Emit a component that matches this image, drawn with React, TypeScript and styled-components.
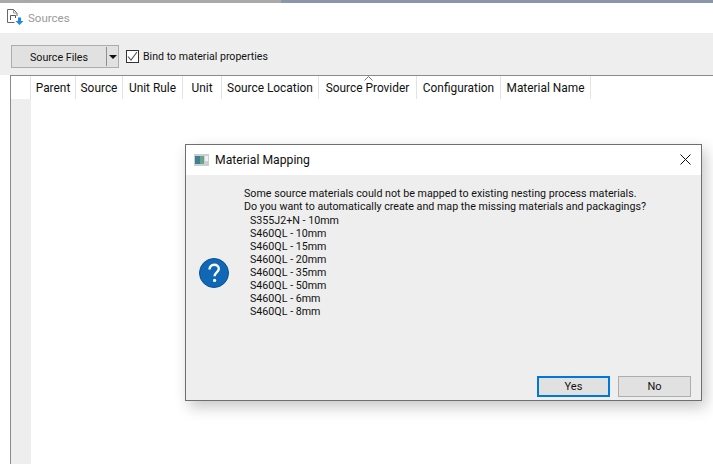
import styled, { createGlobalStyle } from 'styled-components';

const GlobalStyle = createGlobalStyle`
  html, body {
    margin: 0;
    padding: 0;
    background: #fff;
    overflow: hidden;
  }
  #root {
    height: 464px;
  }
`;

const FONT = 'Roboto, "Open Sans", "Liberation Sans", sans-serif';

const Page = styled.div`
  position: relative;
  width: 713px;
  height: 464px;
  display: flex;
  flex-direction: column;
  overflow: hidden;
  font-family: ${FONT};
  font-size: 12px;
  color: #111;
  background: #fff;
`;

const TopStrip = styled.div`
  height: 3px;
  flex: none;
  display: flex;
`;
const StripPart = styled.div<{ width?: number; color: string }>`
  background: ${({ color }) => color};
  ${({ width }) => (width ? `width: ${width}px;` : 'flex: 1;')}
`;

const TitleRow = styled.div`
  height: 30px;
  flex: none;
  display: flex;
  align-items: center;
  gap: 4px;
  padding-left: 7px;
`;
const TitleText = styled.span`
  font-size: 11.5px;
  color: #9a9a9a;
`;

const Toolbar = styled.div`
  height: 42px;
  flex: none;
  box-sizing: border-box;
  padding: 12px 0 0 11px;
  display: flex;
  align-items: flex-start;
  gap: 7px;
  background: #eeeeee;
`;

const SplitButton = styled.div`
  width: 108px;
  height: 23px;
  box-sizing: border-box;
  display: flex;
  align-items: center;
  background: #e1e1e1;
  border: 1px solid #adadad;
`;
const SplitLabel = styled.span`
  flex: 1;
  padding-top: 1px;
  text-align: center;
  font-size: 10.7px;
`;
const SplitDivider = styled.div`
  width: 1px;
  height: 19px;
  background: #8f8f8f;
`;
const SplitArrow = styled.div`
  width: 11px;
  display: flex;
  justify-content: center;
  &::before {
    content: '';
    border-top: 4px solid #111;
    border-left: 4px solid transparent;
    border-right: 4px solid transparent;
  }
`;

const CheckLabel = styled.label`
  height: 23px;
  display: flex;
  align-items: center;
  gap: 4px;
  font-size: 10.6px;
`;
const CheckBox = styled.span`
  width: 13px;
  height: 13px;
  box-sizing: border-box;
  display: flex;
  background: #fff;
  border: 1px solid #333;
`;

const Table = styled.div`
  flex: 1;
  display: flex;
  flex-direction: column;
  border-top: 1px solid #8a8a90;
  border-left: 1px solid #8a8a90;
  margin-left: 10px;
`;
const HeaderRow = styled.div`
  height: 23px;
  flex: none;
  display: flex;
`;
const Corner = styled.div`
  width: 19px;
  flex: none;
`;
const HeaderCell = styled.div<{ $width: number }>`
  position: relative;
  width: ${({ $width }) => $width}px;
  flex: none;
  box-sizing: border-box;
  display: flex;
  align-items: center;
  justify-content: center;
  white-space: nowrap;
  font-size: 11.9px;
  border-left: 1px solid #e3e3e3;
`;
const LastEdge = styled.div`
  width: 1px;
  background: #e3e3e3;
`;
const SortCaret = styled.svg`
  position: absolute;
  top: 0;
  left: 45px;
  width: 9px;
  height: 5px;
`;
const TableBody = styled.div`
  flex: 1;
  display: flex;
`;
const RowHeaders = styled.div`
  width: 20px;
  flex: none;
  background: #eeeeee;
`;

const Dialog = styled.div`
  position: absolute;
  left: 185px;
  top: 144px;
  width: 517px;
  height: 257px;
  box-sizing: border-box;
  display: flex;
  flex-direction: column;
  background: #eeeeee;
  border: 1px solid #6f6f6f;
  box-shadow: 4px 6px 14px rgba(0, 0, 0, 0.22);
`;
const DialogTitle = styled.div`
  height: 30px;
  flex: none;
  box-sizing: border-box;
  display: flex;
  align-items: center;
  gap: 6px;
  padding: 0 10px 1px 8px;
  background: #fff;
  font-size: 12.2px;
`;
const DialogName = styled.span`
  flex: 1;
`;
const DialogBody = styled.div`
  flex: 1;
  display: flex;
  align-items: center;
  padding-left: 13px;
  gap: 15px;
`;
const Message = styled.div`
  align-self: flex-start;
  padding-top: 12px;
  font-size: 10.7px;
  line-height: 13px;
  white-space: nowrap;
`;
const MaterialList = styled.ul`
  list-style: none;
  margin: 1px 0 0;
  padding: 0 0 0 6px;
`;
const DialogActions = styled.div`
  height: 29px;
  flex: none;
  box-sizing: border-box;
  display: flex;
  align-items: flex-end;
  justify-content: flex-end;
  gap: 8px;
  padding: 0 10px 3px 0;
`;
const DialogButton = styled.button<{ $primary?: boolean }>`
  width: 73px;
  height: 21px;
  padding: 0;
  box-sizing: border-box;
  font-family: ${FONT};
  font-size: 11px;
  color: #111;
  background: #e1e1e1;
  border: ${({ $primary }) => ($primary ? '2px solid #0078d7' : '1px solid #adadad')};
`;

const columns = [
  { label: 'Parent', width: 45 },
  { label: 'Source', width: 47 },
  { label: 'Unit Rule', width: 60 },
  { label: 'Unit', width: 39 },
  { label: 'Source Location', width: 97 },
  { label: 'Source Provider', width: 98, sorted: true },
  { label: 'Configuration', width: 84 },
  { label: 'Material Name', width: 90 },
];

const materials = [
  'S355J2+N - 10mm',
  'S460QL - 10mm',
  'S460QL - 15mm',
  'S460QL - 20mm',
  'S460QL - 35mm',
  'S460QL - 50mm',
  'S460QL - 6mm',
  'S460QL - 8mm',
];

const SourcesIcon = () => (
  <svg width="17" height="20" viewBox="0 0 17 20" fill="none">
    <path d="M.5 1.5h6l3.5 3.5v3M.5 1.5v13h7" stroke="#666" />
    <path d="M6.5 1.5v3.5H10" stroke="#999" />
    <path d="M3.5 12V7.5h5V10" stroke="#555" />
    <path d="M11 9.5h3v3.5h2.5l-4 4-4-4H11z" fill="#1e88e5" />
  </svg>
);

const WindowIcon = () => (
  <svg width="15" height="12" viewBox="0 0 15 12">
    <rect width="15" height="12" fill="#c9d0d2" />
    <rect x="1" y="2" width="5" height="8" fill="#3f7f8f" />
    <rect x="6" y="2" width="4" height="8" fill="#6fa08c" />
    <rect x="11" y="2" width="3" height="5" fill="#eef2f3" />
  </svg>
);

const QuestionIcon = () => (
  <svg width="30" height="30" viewBox="0 0 30 30">
    <circle cx="15" cy="15" r="14.5" fill="#0f67b5" stroke="#0c4f8f" />
    <path d="M10.5 11.5c0-3 2-4.7 4.7-4.7s4.6 1.7 4.6 4c0 3.6-4.2 3.6-4.2 7.4" fill="none" stroke="#fff" strokeWidth="2.4" />
    <circle cx="15.6" cy="22.4" r="1.6" fill="#fff" />
  </svg>
);

const App = () => (
  <>
    <GlobalStyle />
    <Page>
      <TopStrip>
        <StripPart width={281} color="#a9a9a9" />
        <StripPart color="#8a97ab" />
      </TopStrip>
      <TitleRow>
        <SourcesIcon />
        <TitleText>Sources</TitleText>
      </TitleRow>
      <Toolbar>
        <SplitButton>
          <SplitLabel>Source Files</SplitLabel>
          <SplitDivider />
          <SplitArrow />
        </SplitButton>
        <CheckLabel>
          <CheckBox>
            <svg width="11" height="11" viewBox="0 0 11 11" fill="none">
              <path d="M1 5.5l3 3.5 6-8" stroke="#555" strokeWidth="1.1" />
            </svg>
          </CheckBox>
          Bind to material properties
        </CheckLabel>
      </Toolbar>
      <Table>
        <HeaderRow>
          <Corner />
          {columns.map(({ label, width, sorted }) => (
            <HeaderCell key={label} $width={width}>
              {sorted && (
                <SortCaret viewBox="0 0 9 5" fill="none">
                  <path d="M.5 4.5l4-4 4 4" stroke="#777" />
                </SortCaret>
              )}
              {label}
            </HeaderCell>
          ))}
          <LastEdge />
        </HeaderRow>
        <TableBody>
          <RowHeaders />
        </TableBody>
      </Table>
      <Dialog>
        <DialogTitle>
          <WindowIcon />
          <DialogName>Material Mapping</DialogName>
          <svg width="11" height="11" viewBox="0 0 11 11" stroke="#111" fill="none">
            <path d="M.5.5l10 10M10.5.5l-10 10" />
          </svg>
        </DialogTitle>
        <DialogBody>
          <QuestionIcon />
          <Message>
            Some source materials could not be mapped to existing nesting process materials.
            <br />
            Do you want to automatically create and map the missing materials and packagings?
            <MaterialList>
              {materials.map((m) => (
                <li key={m}>{m}</li>
              ))}
            </MaterialList>
          </Message>
        </DialogBody>
        <DialogActions>
          <DialogButton $primary>Yes</DialogButton>
          <DialogButton>No</DialogButton>
        </DialogActions>
      </Dialog>
    </Page>
  </>
);

export default App;
